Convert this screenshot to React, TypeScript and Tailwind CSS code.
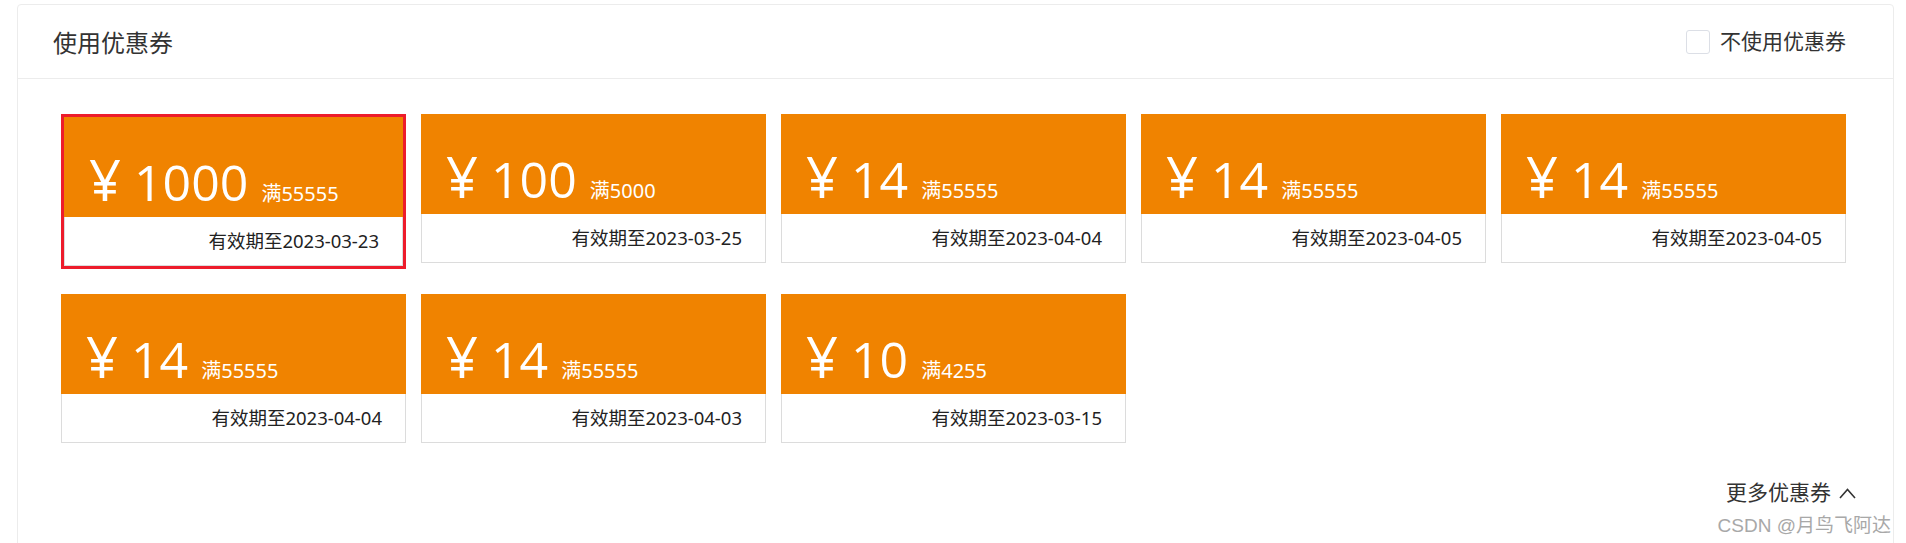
import { useState } from "react";

type Coupon = {
  id: number;
  amount: number;
  limit: number;
  expire: string;
};

const coupons: Coupon[] = [
  { id: 1, amount: 1000, limit: 55555, expire: "2023-03-23" },
  { id: 2, amount: 100, limit: 5000, expire: "2023-03-25" },
  { id: 3, amount: 14, limit: 55555, expire: "2023-04-04" },
  { id: 4, amount: 14, limit: 55555, expire: "2023-04-05" },
  { id: 5, amount: 14, limit: 55555, expire: "2023-04-05" },
  { id: 6, amount: 14, limit: 55555, expire: "2023-04-04" },
  { id: 7, amount: 14, limit: 55555, expire: "2023-04-03" },
  { id: 8, amount: 10, limit: 4255, expire: "2023-03-15" },
];

function CouponCard({
  coupon,
  selected,
  onClick,
}: {
  coupon: Coupon;
  selected: boolean;
  onClick: () => void;
}) {
  return (
    <div
      onClick={onClick}
      className={`w-[345px] cursor-pointer ${
        selected ? "border-[3px] border-[#ed1c2b]" : ""
      }`}
    >
      <div className="h-[100px] bg-[#f08300] flex items-baseline pl-[25px] pt-[34px] text-white font-['Open_Sans',sans-serif]">
        <span className="text-[56px] leading-none">¥</span>
        <span className="text-[50px] leading-none ml-[13px]">{coupon.amount}</span>
        <span className="text-[20px] leading-none ml-[13px] font-['Noto_Sans','Noto_Sans_CJK_SC',sans-serif]">
          满{coupon.limit}
        </span>
      </div>
      <div className="h-[49px] border border-t-0 border-[#dcdcdc] bg-white flex items-center justify-end pr-[23px] text-[18.5px] text-[#222]">
        有效期至{coupon.expire}
      </div>
    </div>
  );
}

export default function App() {
  const [selected, setSelected] = useState<number | null>(1);
  const [noCoupon, setNoCoupon] = useState(false);

  return (
    <div className="relative min-h-[543px] bg-white pt-[4px] pl-[17px] pr-[12px] font-['Noto_Sans','Noto_Sans_CJK_SC',sans-serif] overflow-hidden">
      {/* Panel */}
      <div className="border border-[#ececec] rounded-[4px] pb-[60px]">
        {/* Header */}
        <div className="h-[74px] border-b border-[#ececec] flex items-center justify-between pl-[35px] pr-[47px]">
          <h2 className="text-[24px] text-[#333] pt-[3px]">使用优惠券</h2>
          <label
            className="flex items-center gap-[10px] cursor-pointer"
            onClick={() => setNoCoupon(!noCoupon)}
          >
            <span className="w-[24px] h-[24px] rounded-[3px] border border-[#dcdfe6] bg-white" />
            <span className="text-[21px] text-[#333]">不使用优惠券</span>
          </label>
        </div>

        {/* Coupons */}
        <div className="pt-[35px] pl-[43px] pr-[43px]">
          <div className="flex flex-wrap items-start gap-x-[15px] gap-y-[25px]">
            {coupons.map((c) => (
              <CouponCard
                key={c.id}
                coupon={c}
                selected={selected === c.id}
                onClick={() => setSelected(c.id)}
              />
            ))}
          </div>
        </div>

        {/* More */}
        <div className="mt-[34px] h-[32px] flex items-center justify-end pr-[37px] text-[21px] text-[#333]">
          <span>更多优惠券</span>
          <svg width="17" height="11" viewBox="0 0 17 11" className="ml-[8px]" fill="none">
            <polyline points="1,10 8.5,1.5 16,10" stroke="#333" strokeWidth="1.6" />
          </svg>
        </div>
      </div>

      {/* watermark */}
      <div className="absolute right-[15px] top-[512px] text-[19px] text-[#a8a8a8] font-['Liberation_Sans','Noto_Sans_CJK_SC',sans-serif]">
        CSDN @月鸟飞阿达
      </div>
    </div>
  );
}
